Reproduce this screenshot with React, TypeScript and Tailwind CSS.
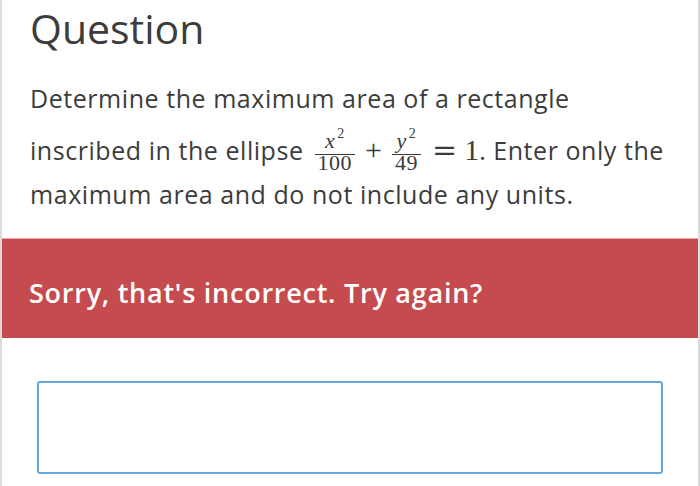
import React from 'react';

// stacked fraction; its baseline is the numerator's, raised so the bar sits on the math axis
function Frac({ num, den }: { num: React.ReactNode; den: React.ReactNode }) {
  return (
    <span className="inline-flex flex-col items-stretch align-[12px] mx-[4px] text-[22px] tracking-[0.5px] text-center">
      <span className="pt-[12px] pb-[3px] px-[3px] leading-[20px]">{num}</span>
      <span className="px-[3px] leading-[16px] border-t border-[#3a3a3a]">{den}</span>
    </span>
  );
}

function Sq() {
  return <span className="text-[14px] leading-[0] align-[10px] not-italic ml-[2px]">2</span>;
}

export default function App() {
  return (
    <div className="w-[700px] h-[486px] bg-white border-x-2 border-[#dcdcdc] overflow-hidden font-['Open_Sans',sans-serif] text-[#3c3c3c]">
      <div className="px-[28px]">
        <h1 className="text-[41px] leading-[56px]">Question</h1>
        <p className="mt-[21px] text-[25px] leading-[42px] tracking-[0.55px]">
          Determine the maximum area of a rectangle inscribed in the ellipse{' '}
          <span className="font-['Liberation_Serif',serif] tracking-normal">
            <Frac
              num={
                <>
                  <i>x</i>
                  <Sq />
                </>
              }
              den="100"
            />
            <span className="text-[30px] mx-[6px]">+</span>
            <Frac
              num={
                <>
                  <i>y</i>
                  <Sq />
                </>
              }
              den="49"
            />
            <span className="font-['DejaVu_Serif',serif] text-[30px] mx-[7px]">=</span>
            <span className="text-[30px]">1</span>
          </span>
          . Enter only the maximum area and do not include any units.
        </p>
      </div>
      <div className="mt-[23px] h-[100px] bg-[#c64b4e] border-t border-[#eaa7a9] flex items-center pt-[10px] px-[27px]">
        <span className="text-white font-semibold text-[27px] tracking-[0.75px]">Sorry, that's incorrect. Try again?</span>
      </div>
      <div className="px-[35px] pt-[43px]">
        <input className="block w-[626px] h-[93px] border-2 border-[#68a7d8] rounded-[3px] outline-none" />
      </div>
    </div>
  );
}
